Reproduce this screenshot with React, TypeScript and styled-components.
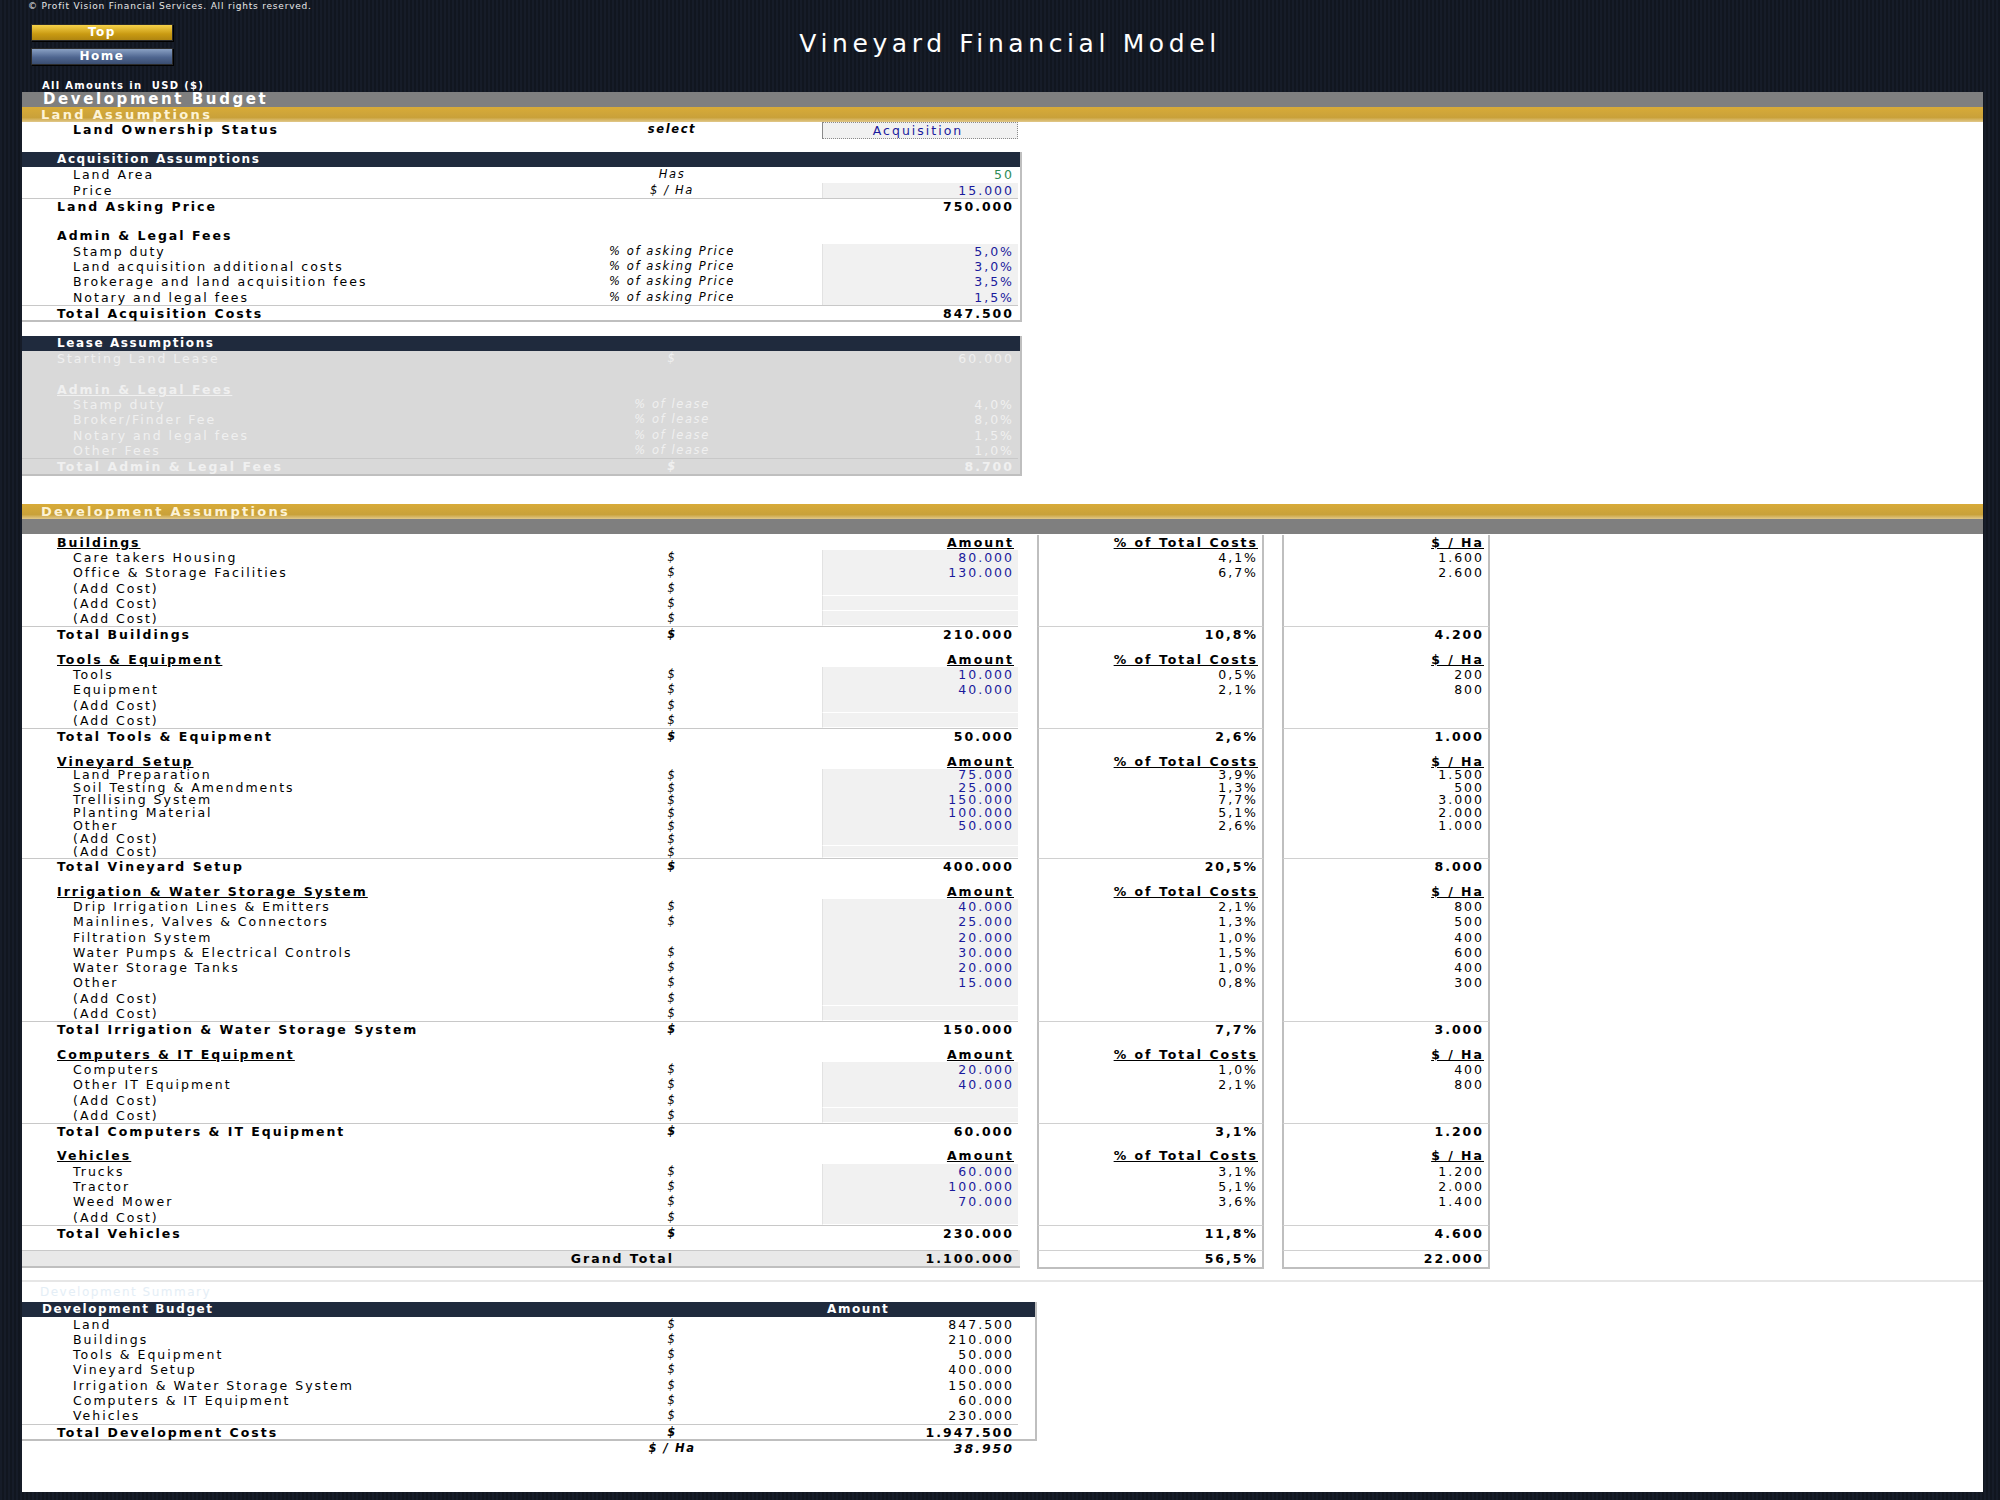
import styled, { createGlobalStyle } from "styled-components";

const Global = createGlobalStyle`
  body { margin: 0; background: #141a25; font-family: "DejaVu Sans", "Open Sans", sans-serif; }
`;

const Page = styled.div`
  width: 2000px;
  height: 1500px;
  background: repeating-linear-gradient(90deg, #161c28 0 2px, #11161f 2px 4px);
  display: flex;
  flex-direction: column;
  overflow: hidden;
`;

const Header = styled.div`
  height: 92px;
  position: relative;
  padding-left: 28px;
  display: flex;
  flex-direction: column;
`;

const Copyright = styled.div`
  color: #e8e8e8;
  font-size: 9px;
  letter-spacing: 0.8px;
  height: 12px;
  line-height: 12px;
`;

const NavButton = styled.div<{ $gold?: boolean }>`
  width: 140px;
  height: 15px;
  margin-left: 3px;
  margin-top: ${(p) => (p.$gold ? "12px" : "7px")};
  background: ${(p) =>
    p.$gold
      ? "linear-gradient(#f6d24a, #c99a12 60%, #b08510)"
      : "linear-gradient(#8aa1c4, #4f6690 55%, #3a4d70)"};
  border: 1px solid #2a2a2a;
  box-shadow: 1px 1px 0 #000;
  color: #fff;
  font-weight: 700;
  font-size: 12px;
  letter-spacing: 1.5px;
  text-align: center;
  line-height: 15px;
`;

const Title = styled.div`
  position: absolute;
  left: 0;
  right: 0;
  top: 29px;
  text-align: center;
  color: #fff;
  font-size: 25px;
  letter-spacing: 4.6px;
  padding-left: 20px;
`;

const Amounts = styled.div`
  color: #fff;
  font-weight: 700;
  font-size: 10px;
  letter-spacing: 1.3px;
  margin: 15px 0 0 14px;
`;

const Sheet = styled.div`
  margin-left: 22px;
  width: 1961px;
  height: 1400px;
  background: #fff;
`;

const BarGray = styled.div`
  background: #7f7f7f;
  color: #fff;
  font-weight: 700;
  font-size: 15px;
  letter-spacing: 2.6px;
  height: 15px;
  line-height: 15px;
  padding-left: 21px;
`;

const BarGold = styled.div`
  background: linear-gradient(#d8ab38, #c9a13a 70%, #e1c88a);
  color: #fdf3d6;
  font-weight: 700;
  font-size: 13px;
  letter-spacing: 2.3px;
  height: 15px;
  line-height: 15px;
  padding-left: 19px;
`;

const Box = styled.div<{ $grey?: boolean; $w?: number }>`
  width: ${(p) => p.$w ?? 998}px;
  border-right: 2px solid #bfbfbf;
  border-bottom: 2px solid #bfbfbf;
  background: ${(p) => (p.$grey ? "#d9d9d9" : "#fff")};
  color: ${(p) => (p.$grey ? "#f0f0f0" : "#000")};
`;

const NavyHead = styled.div<{ $split?: number }>`
  background: #1f2a3d;
  color: #fff;
  font-weight: 700;
  font-size: 12px;
  letter-spacing: 1.6px;
  height: 15px;
  line-height: 15px;
  display: grid;
  grid-template-columns: ${(p) => p.$split ?? 760}px 1fr;
`;

const Row = styled.div<{ $h?: number; $total?: boolean; $band?: boolean }>`
  display: grid;
  grid-template-columns: 600px 100px 100px 196px 19px 227px 18px 208px;
  height: ${(p) => p.$h ?? 15.3}px;
  line-height: ${(p) => p.$h ?? 15.3}px;
  font-size: 12.5px;
  letter-spacing: 2px;
  font-weight: ${(p) => (p.$total ? 700 : 400)};
  background: ${(p) => (p.$band ? "linear-gradient(90deg, #e8e8e8 0 998px, transparent 998px)" : "none")};
  white-space: nowrap;
`;

const Label = styled.div<{ $indent: number; $u?: boolean }>`
  padding-left: ${(p) => p.$indent}px;
  text-decoration: ${(p) => (p.$u ? "underline" : "none")};
  font-weight: ${(p) => (p.$u ? 700 : "inherit")};
`;

const TotalLine = styled.div`
  width: 998px;
  border-bottom: 2px solid #bfbfbf;
`;

const Unit = styled.div`
  text-align: center;
  font-style: italic;
  font-size: 11.5px;
  letter-spacing: 1.6px;
  overflow: visible;
  display: flex;
  justify-content: center;
`;

const Input = styled.div<{ $fill?: boolean; $color?: string; $head?: boolean }>`
  text-align: right;
  padding-right: 4px;
  background: ${(p) => (p.$fill ? "#f1f1f1" : "transparent")};
  border-bottom: ${(p) => (p.$fill ? "1px solid #fff" : "none")};
  border-left: ${(p) => (p.$fill ? "1px solid #e2e2e2" : "none")};
  box-sizing: border-box;
  height: 100%;
  color: ${(p) => p.$color ?? "inherit"};
  font-weight: ${(p) => (p.$head ? 700 : "inherit")};
  text-decoration: ${(p) => (p.$head ? "underline" : "none")};
`;

const SelectBox = styled(Input)`
  text-align: center;
  border: 1px dotted #8a8a8a;
  border-left: 1px solid #8a8a8a;
`;

const Panel = styled.div<{ $head?: boolean; $top?: boolean; $bottom?: boolean }>`
  border-left: 2px solid #bfbfbf;
  border-right: 2px solid #bfbfbf;
  border-top: ${(p) => (p.$top ? "1px solid #d0d0d0" : "none")};
  border-bottom: ${(p) => (p.$bottom ? "2px solid #bfbfbf" : "none")};
  text-align: right;
  padding-right: 4px;
  font-weight: ${(p) => (p.$head ? 700 : "inherit")};
  text-decoration: ${(p) => (p.$head ? "underline" : "none")};
`;

const Spacer = styled.div<{ $h: number }>`
  height: ${(p) => p.$h}px;
`;

const Cell = styled.div<{ $topLine?: boolean }>`
  border-top: ${(p) => (p.$topLine ? "1px solid #c8c8c8" : "none")};
`;

const GrandLabel = styled(Cell)`
  grid-column: 1 / 4;
  text-align: right;
  padding-right: 148px;
`;

const GhostTitle = styled.div`
  height: 20px;
  border-top: 2px solid #e6e6e6;
  color: #e4eef6;
  font-size: 12px;
  letter-spacing: 1.5px;
  padding-left: 18px;
  line-height: 20px;
`;

type Item = { name: string; amt?: string; pct?: string; ha?: string; dollar?: boolean };
type Section = { title: string; items: Item[]; total: [string, string, string, string]; h?: number };

const sections: Section[] = [
  {
    title: "Buildings",
    items: [
      { name: "Care takers Housing", amt: "80.000", pct: "4,1%", ha: "1.600" },
      { name: "Office & Storage Facilities", amt: "130.000", pct: "6,7%", ha: "2.600" },
      { name: "(Add Cost)" },
      { name: "(Add Cost)" },
      { name: "(Add Cost)" },
    ],
    total: ["Total Buildings", "210.000", "10,8%", "4.200"],
  },
  {
    title: "Tools & Equipment",
    items: [
      { name: "Tools", amt: "10.000", pct: "0,5%", ha: "200" },
      { name: "Equipment", amt: "40.000", pct: "2,1%", ha: "800" },
      { name: "(Add Cost)" },
      { name: "(Add Cost)" },
    ],
    total: ["Total Tools & Equipment", "50.000", "2,6%", "1.000"],
  },
  {
    title: "Vineyard Setup",
    h: 12.8,
    items: [
      { name: "Land Preparation", amt: "75.000", pct: "3,9%", ha: "1.500" },
      { name: "Soil Testing & Amendments", amt: "25.000", pct: "1,3%", ha: "500" },
      { name: "Trellising System", amt: "150.000", pct: "7,7%", ha: "3.000" },
      { name: "Planting Material", amt: "100.000", pct: "5,1%", ha: "2.000" },
      { name: "Other", amt: "50.000", pct: "2,6%", ha: "1.000" },
      { name: "(Add Cost)" },
      { name: "(Add Cost)" },
    ],
    total: ["Total Vineyard Setup", "400.000", "20,5%", "8.000"],
  },
  {
    title: "Irrigation & Water Storage System",
    items: [
      { name: "Drip Irrigation Lines & Emitters", amt: "40.000", pct: "2,1%", ha: "800" },
      { name: "Mainlines, Valves & Connectors", amt: "25.000", pct: "1,3%", ha: "500" },
      { name: "Filtration System", amt: "20.000", pct: "1,0%", ha: "400", dollar: false },
      { name: "Water Pumps & Electrical Controls", amt: "30.000", pct: "1,5%", ha: "600" },
      { name: "Water Storage Tanks", amt: "20.000", pct: "1,0%", ha: "400" },
      { name: "Other", amt: "15.000", pct: "0,8%", ha: "300" },
      { name: "(Add Cost)" },
      { name: "(Add Cost)" },
    ],
    total: ["Total Irrigation & Water Storage System", "150.000", "7,7%", "3.000"],
  },
  {
    title: "Computers & IT Equipment",
    items: [
      { name: "Computers", amt: "20.000", pct: "1,0%", ha: "400" },
      { name: "Other IT Equipment", amt: "40.000", pct: "2,1%", ha: "800" },
      { name: "(Add Cost)" },
      { name: "(Add Cost)" },
    ],
    total: ["Total Computers & IT Equipment", "60.000", "3,1%", "1.200"],
  },
  {
    title: "Vehicles",
    items: [
      { name: "Trucks", amt: "60.000", pct: "3,1%", ha: "1.200" },
      { name: "Tractor", amt: "100.000", pct: "5,1%", ha: "2.000" },
      { name: "Weed Mower", amt: "70.000", pct: "3,6%", ha: "1.400" },
      { name: "(Add Cost)" },
    ],
    total: ["Total Vehicles", "230.000", "11,8%", "4.600"],
  },
];

const summary: [string, string][] = [
  ["Land", "847.500"],
  ["Buildings", "210.000"],
  ["Tools & Equipment", "50.000"],
  ["Vineyard Setup", "400.000"],
  ["Irrigation & Water Storage System", "150.000"],
  ["Computers & IT Equipment", "60.000"],
  ["Vehicles", "230.000"],
];

const BLUE = "#1a1a9c";

function SimpleRow(props: { label: string; indent: number; unit?: string; value?: string; fill?: boolean; color?: string; total?: boolean; line?: boolean; u?: boolean }) {
  return (
    <Row $total={props.total}>
      <Cell $topLine={props.line}><Label $indent={props.indent} $u={props.u}>{props.label}</Label></Cell>
      <Cell $topLine={props.line}><Unit>{props.unit}</Unit></Cell>
      <Cell $topLine={props.line} />
      <Cell $topLine={props.line}>
        <Input $fill={props.fill} $color={props.color}>{props.value}</Input>
      </Cell>
    </Row>
  );
}

function CostSection({ s }: { s: Section }) {
  return (
    <>
      <Row>
        <Label $indent={35} $u>{s.title}</Label>
        <div />
        <div />
        <Input $head>Amount</Input>
        <div />
        <Panel $head>% of Total Costs</Panel>
        <div />
        <Panel $head>$ / Ha</Panel>
      </Row>
      {s.items.map((it, i) => (
        <Row key={i} $h={s.h}>
          <Label $indent={51}>{it.name}</Label>
          <Unit>{it.dollar === false ? "" : "$"}</Unit>
          <div />
          <Input $fill $color={BLUE}>{it.amt}</Input>
          <div />
          <Panel>{it.pct}</Panel>
          <div />
          <Panel>{it.ha}</Panel>
        </Row>
      ))}
      <Row $total>
        <Cell $topLine><Label $indent={35}>{s.total[0]}</Label></Cell>
        <Cell $topLine><Unit>$</Unit></Cell>
        <Cell $topLine />
        <Cell $topLine><Input>{s.total[1]}</Input></Cell>
        <div />
        <Panel $top>{s.total[2]}</Panel>
        <div />
        <Panel $top>{s.total[3]}</Panel>
      </Row>
      <Row $h={10}>
        <div /><div /><div /><div /><div />
        <Panel /><div /><Panel />
      </Row>
    </>
  );
}

export default function App() {
  return (
    <Page>
      <Global />
      <Header>
        <Copyright>© Profit Vision Financial Services. All rights reserved.</Copyright>
        <NavButton $gold>Top</NavButton>
        <NavButton>Home</NavButton>
        <Title>Vineyard Financial Model</Title>
        <Amounts>All Amounts in&nbsp; USD ($)</Amounts>
      </Header>
      <Sheet>
        <BarGray>Development Budget</BarGray>
        <BarGold>Land Assumptions</BarGold>
        <Row $total>
          <Label $indent={51}>Land Ownership Status</Label>
          <Unit>select</Unit>
          <div />
          <SelectBox $fill $color={BLUE} style={{ fontWeight: 400 }}>Acquisition</SelectBox>
        </Row>
        <Spacer $h={15} />
        <Box>
          <NavyHead><span style={{ paddingLeft: 35 }}>Acquisition Assumptions</span></NavyHead>
          <SimpleRow label="Land Area" indent={51} unit="Has" value="50" color="#2e8b57" />
          <SimpleRow label="Price" indent={51} unit="$ / Ha" value="15.000" fill color={BLUE} />
          <SimpleRow label="Land Asking Price" indent={35} value="750.000" total line />
          <Spacer $h={15.3} />
          <SimpleRow label="Admin & Legal Fees" indent={35} total />
          <SimpleRow label="Stamp duty" indent={51} unit="% of asking Price" value="5,0%" fill color={BLUE} />
          <SimpleRow label="Land acquisition additional costs" indent={51} unit="% of asking Price" value="3,0%" fill color={BLUE} />
          <SimpleRow label="Brokerage and land acquisition fees" indent={51} unit="% of asking Price" value="3,5%" fill color={BLUE} />
          <SimpleRow label="Notary and legal fees" indent={51} unit="% of asking Price" value="1,5%" fill color={BLUE} />
          <SimpleRow label="Total Acquisition Costs" indent={35} value="847.500" total line />
        </Box>
        <Spacer $h={14} />
        <Box $grey>
          <NavyHead><span style={{ paddingLeft: 35 }}>Lease Assumptions</span></NavyHead>
          <SimpleRow label="Starting Land Lease" indent={35} unit="$" value="60.000" />
          <Spacer $h={15.3} />
          <SimpleRow label="Admin & Legal Fees" indent={35} total u />
          <SimpleRow label="Stamp duty" indent={51} unit="% of lease" value="4,0%" />
          <SimpleRow label="Broker/Finder Fee" indent={51} unit="% of lease" value="8,0%" />
          <SimpleRow label="Notary and legal fees" indent={51} unit="% of lease" value="1,5%" />
          <SimpleRow label="Other Fees" indent={51} unit="% of lease" value="1,0%" />
          <SimpleRow label="Total Admin & Legal Fees" indent={35} unit="$" value="8.700" total line />
        </Box>
        <Spacer $h={28} />
        <BarGold>Development Assumptions</BarGold>
        <BarGray />
        <Spacer $h={1} />
        {sections.map((s) => (
          <CostSection key={s.title} s={s} />
        ))}
        <Row $total $band>
          <GrandLabel $topLine>Grand Total</GrandLabel>
          <Cell $topLine><Input>1.100.000</Input></Cell>
          <div />
          <Panel $top $bottom>56,5%</Panel>
          <div />
          <Panel $top $bottom>22.000</Panel>
        </Row>
        <TotalLine />
        <Spacer $h={12} />
        <GhostTitle>Development Summary</GhostTitle>
        <Box $w={1013}>
          <NavyHead $split={805}>
            <span style={{ paddingLeft: 20 }}>Development Budget</span>
            <span>Amount</span>
          </NavyHead>
          {summary.map(([n, v]) => (
            <SimpleRow key={n} label={n} indent={51} unit="$" value={v} />
          ))}
          <SimpleRow label="Total Development Costs" indent={35} unit="$" value="1.947.500" total line />
        </Box>
        <Row $total>
          <div />
          <Unit>$ / Ha</Unit>
          <div />
          <Input style={{ fontStyle: "italic" }}>38.950</Input>
        </Row>
      </Sheet>
    </Page>
  );
}
